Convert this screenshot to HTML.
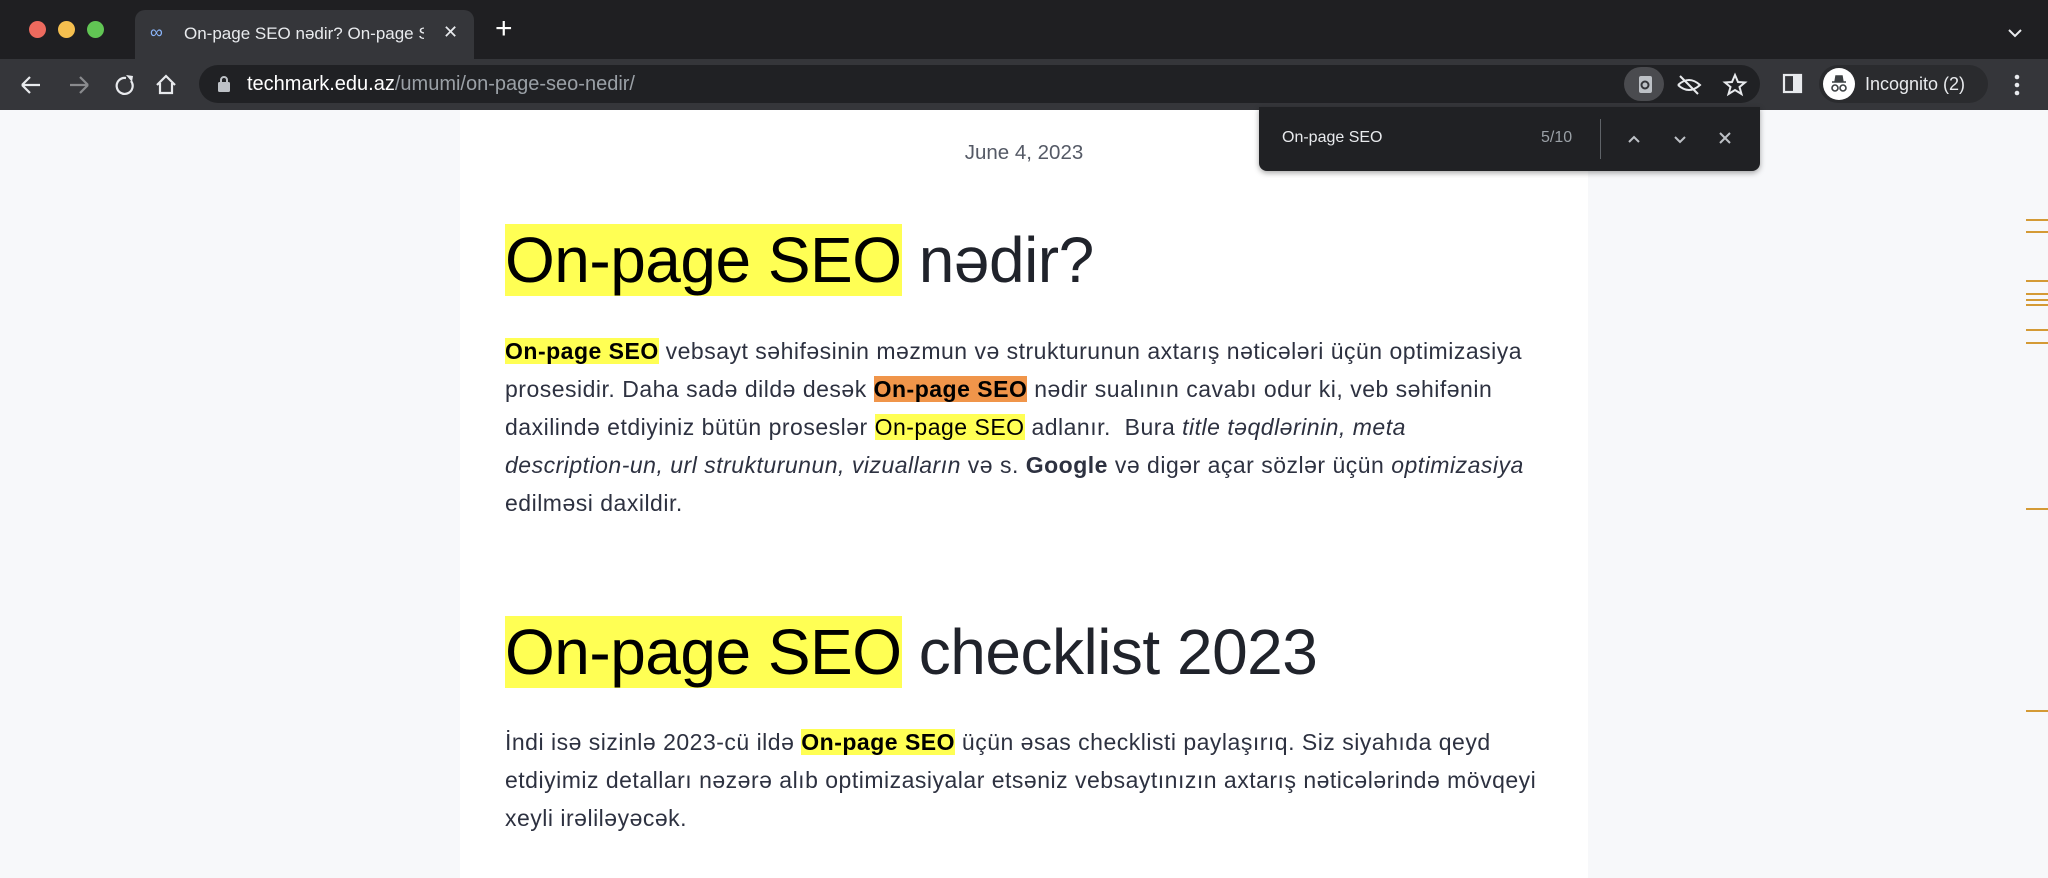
<!DOCTYPE html>
<html><head><meta charset="utf-8"><style>
*{margin:0;padding:0;box-sizing:border-box}
body{width:2048px;height:878px;overflow:hidden;background:#f7f8fa;font-family:"Liberation Sans",sans-serif;position:relative}
.abs{position:absolute}
.tabbar{left:0;top:0;width:2048px;height:59px;background:#1f1f22}
.toolbar{left:0;top:59px;width:2048px;height:51px;background:#35363a}
.tab{left:135px;top:10px;width:339px;height:49px;background:#35363a;border-radius:10px 10px 0 0;color:#e8eaed;font-size:17px}
.dot{width:17px;height:17px;border-radius:50%;top:21px}
.omni{left:199px;top:65px;width:1561px;height:38px;background:#202124;border-radius:19px}
.col{left:460px;top:110px;width:1128px;height:768px;background:#fff}
.txt{color:#2d3140;font-size:23px;letter-spacing:0.5px;line-height:38px;white-space:nowrap}
.h{color:#20232b;font-size:64px;white-space:nowrap;letter-spacing:-0.5px}
.y{background:#ffff54;color:#000}
.o{background:#f0954a;color:#000}
b{font-weight:bold;color:#000}
.mk{left:2026px;width:22px;height:2px;background:#d49a35}
.find{left:1259px;top:107px;width:501px;height:64px;background:#202124;border-radius:0 0 8px 8px;box-shadow:0 2px 6px rgba(0,0,0,.35);color:#e8eaed;font-size:16px}
</style></head><body>
<div class="abs tabbar"></div>
<div class="abs dot" style="left:29px;background:#ed6a5e"></div>
<div class="abs dot" style="left:58px;background:#f5bf4f"></div>
<div class="abs dot" style="left:87px;background:#61c554"></div>
<div class="abs tab">
 <span class="abs" style="left:15px;top:12px;color:#8ab4f8;font-size:18px">∞</span>
 <span class="abs" style="left:49px;top:14px;width:240px;overflow:hidden;white-space:nowrap">On-page SEO nədir? On-page SEO</span>
 <span class="abs" style="left:308px;top:12px;font-size:18px">✕</span>
</div>
<div class="abs" style="left:495px;top:14px;color:#fff;font-size:30px;line-height:30px">+</div>
<svg class="abs" style="left:2006px;top:26px" width="18" height="14"><path d="M3 4l6 6 6-6" stroke="#e8eaed" stroke-width="2" fill="none"/></svg>
<div class="abs toolbar"></div>
<svg class="abs" style="left:18px;top:72px" width="200" height="26">
 <path d="M4 13h18M4 13l8-8M4 13l8 8" stroke="#e8eaed" stroke-width="2.2" fill="none"/>
 <path d="M52 13h18M70 13l-8-8M70 13l-8 8" stroke="#8a8b8e" stroke-width="2.2" fill="none"/>
 <path d="M108 6a8 8 0 1 0 5 3" stroke="#e8eaed" stroke-width="2.2" fill="none"/><path d="M108 3l7 1-1 6z" fill="#e8eaed"/>
 <path d="M139 13l9-9 9 9M142 11v10h12v-10" stroke="#e8eaed" stroke-width="2.2" fill="none"/>
</svg>
<div class="abs omni"></div>
<svg class="abs" style="left:217px;top:75px" width="14" height="18"><rect x="1" y="7" width="12" height="10" rx="1.5" fill="#bdc1c6"/><path d="M4 8V5a3 3 0 0 1 6 0v3" stroke="#bdc1c6" stroke-width="2" fill="none"/></svg>
<div class="abs" style="left:247px;top:73px;font-size:20px;color:#fff;white-space:nowrap">techmark.edu.az<span style="color:#9aa0a6">/umumi/on-page-seo-nedir/</span></div>
<div class="abs" style="left:1624px;top:67px;width:40px;height:34px;border-radius:17px;background:#4a4b4f"></div>
<svg class="abs" style="left:1634px;top:72px" width="140" height="26">
 <rect x="5" y="4" width="13" height="17" rx="2" fill="#bdc1c6"/><circle cx="11" cy="13" r="3.5" stroke="#35363a" stroke-width="2" fill="none"/>
 <path d="M44 13q11-10 22 0q-11 10-22 0" stroke="#e8eaed" stroke-width="2" fill="none"/><path d="M46 4l18 18" stroke="#e8eaed" stroke-width="2"/>
 <path d="M101 3l3 7 7 .5-5.5 4.5 2 7-6.5-4-6.5 4 2-7-5.5-4.5 7-.5z" stroke="#e8eaed" stroke-width="2" fill="none"/>
</svg>
<svg class="abs" style="left:1782px;top:73px" width="22" height="22"><rect x="2" y="2" width="17" height="17" stroke="#e8eaed" stroke-width="2.2" fill="none"/><rect x="11" y="2" width="8" height="17" fill="#e8eaed"/></svg>
<div class="abs" style="left:1819px;top:65px;width:169px;height:38px;border-radius:19px;background:#2a2b2e"></div>
<div class="abs" style="left:1823px;top:68px;width:32px;height:32px;border-radius:50%;background:#fff"></div>
<svg class="abs" style="left:1827px;top:72px" width="24" height="24"><path d="M5 10h14M8 10l1-6h6l1 6" fill="#3c4043" stroke="#3c4043" stroke-width="1.5"/><circle cx="8" cy="16" r="3" stroke="#3c4043" stroke-width="1.6" fill="none"/><circle cx="16" cy="16" r="3" stroke="#3c4043" stroke-width="1.6" fill="none"/></svg>
<div class="abs" style="left:1865px;top:74px;color:#e8eaed;font-size:18px">Incognito (2)</div>
<svg class="abs" style="left:2012px;top:72px" width="10" height="26"><circle cx="5" cy="5" r="2.3" fill="#e8eaed"/><circle cx="5" cy="13" r="2.3" fill="#e8eaed"/><circle cx="5" cy="21" r="2.3" fill="#e8eaed"/></svg>

<div class="abs col"></div>
<div class="abs" style="left:0;width:2048px;top:141px;text-align:center;color:#555a66;font-size:20.5px">June 4, 2023</div>
<div class="abs h" style="left:505px;top:225px;line-height:70px"><span class="y">On-page SEO</span> nədir?</div>
<div class="abs txt" style="left:505px;top:332px">
<span class="y"><b>On-page SEO</b></span> vebsayt səhifəsinin məzmun və strukturunun axtarış nəticələri üçün optimizasiya<br>
prosesidir. Daha sadə dildə desək <span class="o"><b>On-page SEO</b></span> nədir sualının cavabı odur ki, veb səhifənin<br>
daxilində etdiyiniz bütün proseslər <span class="y">On-page SEO</span> adlanır.&nbsp; Bura <i>title təqdlərinin, meta</i><br>
<i>description-un, url strukturunun, vizualların</i> və s. <b style="color:#2d3140">Google</b> və digər açar sözlər üçün <i>optimizasiya</i><br>
edilməsi daxildir.</div>
<div class="abs h" style="left:505px;top:616px;line-height:72px"><span class="y">On-page SEO</span> checklist 2023</div>
<div class="abs txt" style="left:505px;top:723px">
İndi isə sizinlə 2023-cü ildə <span class="y"><b>On-page SEO</b></span> üçün əsas checklisti paylaşırıq. Siz siyahıda qeyd<br>
etdiyimiz detalları nəzərə alıb optimizasiyalar etsəniz vebsaytınızın axtarış nəticələrində mövqeyi<br>
xeyli irəliləyəcək.</div>

<div class="abs find">
 <span class="abs" style="left:23px;top:22px">On-page SEO</span>
 <span class="abs" style="left:282px;top:22px;color:#9aa0a6">5/10</span>
 <div class="abs" style="left:341px;top:12px;width:1px;height:40px;background:#5f6368"></div>
 <svg class="abs" style="left:366px;top:22px" width="120" height="20">
  <path d="M4 13l5-5 5 5" stroke="#bdc1c6" stroke-width="2" fill="none"/>
  <path d="M50 8l5 5 5-5" stroke="#bdc1c6" stroke-width="2" fill="none"/>
  <path d="M95 4l10 10M105 4l-10 10" stroke="#bdc1c6" stroke-width="2" fill="none"/>
 </svg>
</div>

<div class="abs mk" style="top:219px"></div>
<div class="abs mk" style="top:231px"></div>
<div class="abs mk" style="top:280px"></div>
<div class="abs mk" style="top:293px"></div>
<div class="abs mk" style="top:299px"></div>
<div class="abs mk" style="top:304px"></div>
<div class="abs mk" style="top:329px"></div>
<div class="abs mk" style="top:342px"></div>
<div class="abs mk" style="top:508px"></div>
<div class="abs mk" style="top:710px"></div>
</body></html>
